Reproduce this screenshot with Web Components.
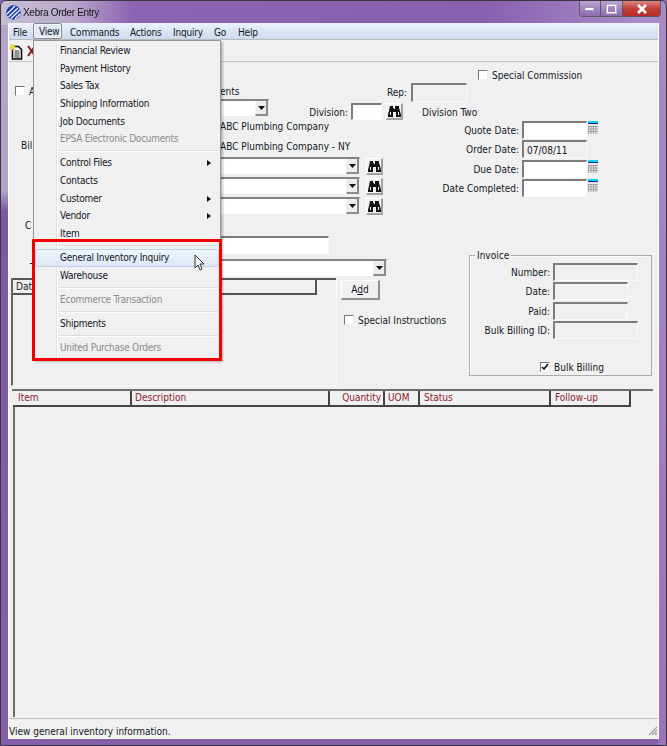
<!DOCTYPE html>
<html>
<head>
<meta charset="utf-8">
<title>Xebra Order Entry</title>
<style>
html, body { margin: 0; padding: 0; background: #8a62ad; }
body { font: 10px "DejaVu Sans Condensed", "DejaVu Sans", "Liberation Sans", sans-serif; font-stretch: condensed; color: #14181f; }
</style>
</head>
<body>

<app-window>
  <menu-bar slot="menubar"></menu-bar>
  <tool-bar slot="toolbar"></tool-bar>
  <order-form></order-form>
  <view-menu slot="overlay"></view-menu>
  <status-bar slot="status">View general inventory information.</status-bar>
</app-window>

<script>
const BINOCULARS = `<svg width="13" height="11" viewBox="0 0 13 11"><path fill="#111" d="M2 0h3v2h1v1h1V2h0V0h4v2l1 3 1 4v2H8V6H5v5H0V9l1-4z"/><path fill="#fff" d="M2 6h1v3H2zM10 6h1v3h-1z"/></svg>`;

const SUNKEN = `
  border-style: solid; border-width: 2px 1px 1px 2px;
  border-color: #7c7c7c #fbfbfb #fbfbfb #7c7c7c;
  box-sizing: border-box;`;

class AppWindow extends HTMLElement {
  constructor() {
    super();
    this.attachShadow({ mode: "open" }).innerHTML = `
      <style>
        :host { display: block; position: relative; width: 667px; height: 746px; overflow: hidden; filter: blur(.3px); }
        .frame {
          box-sizing: border-box; width: 667px; height: 746px; display: flex; flex-direction: column;
          border: 1px solid #3a3540; border-radius: 6px 6px 0 0;
          padding: 0 7px 6px 7px;
          background:
            linear-gradient(90deg, #c7bed2 0, #b9a9cc 70px, #8f63b3 130px, #8a5eae 480px, #a88bc6 640px) 0 0 / 100% 24px no-repeat,
            linear-gradient(180deg, #b7a6c9 0, #b3a1c7 190px, #7c58a6 210px, #8560aa 100%) 0 0 / 8px 100% no-repeat,
            linear-gradient(180deg, #a88bc6 0, #9a72bb 100%) 100% 0 / 8px 100% no-repeat,
            #8560aa;
        }
        .title { height: 22px; flex: none; display: flex; align-items: center; gap: 2px; margin-left: -2px; font: 10px "Liberation Sans", sans-serif; letter-spacing: -.3px; color: #15151c; }
        .title svg.logo { margin-top: 1px; }
        .caption { margin-left: auto; margin-right: -2px; align-self: flex-start; display: flex; height: 16px; border: 1px solid #5d5570; border-top: 0; border-radius: 0 0 4px 4px; box-sizing: border-box; }
        .caption div { display: flex; align-items: center; justify-content: center; box-sizing: border-box; background: linear-gradient(#b9a4d2, #a286c0 50%, #8c6bad); }
        .min { width: 21px; border-right: 1px solid #5d5570; }
        .max { width: 22px; border-right: 1px solid #5d5570; }
        .close { width: 37px; background: linear-gradient(#d98a82, #c4403a 50%, #b42a26) !important; border-radius: 0 0 3px 0; }
        .client { flex: 1; min-height: 0; display: flex; flex-direction: column; background: #f0f0f0; border: 1px solid #fff; border-top: 0; }
        .body { flex: 1; min-height: 0; display: flex; flex-direction: column; }
      </style>
      <div class="frame">
        <div class="title">
          <svg class="logo" width="15" height="15" viewBox="0 0 15 15"><circle cx="7.5" cy="7.5" r="7.2" fill="#1c3fb0"/><path d="M1 9 9 1M2.5 12 12 3M5 13.5 14 5M9 14l5-5" stroke="#fff" stroke-width="1.1" fill="none"/></svg>
          <span>Xebra Order Entry</span>
          <div class="caption">
            <div class="min"><svg width="10" height="4"><rect width="9" height="3" y=".5" fill="#fff" stroke="#555" stroke-width=".4"/></svg></div>
            <div class="max"><svg width="11" height="10"><rect x="1" y="1" width="9" height="8" fill="none" stroke="#fff" stroke-width="2"/><rect x=".4" y=".4" width="10.2" height="9.2" fill="none" stroke="#555" stroke-width=".4"/></svg></div>
            <div class="close"><svg width="12" height="10" viewBox="0 0 12 10"><path d="M2 1l8 8M10 1 2 9" stroke="#fff" stroke-width="2.6"/></svg></div>
          </div>
        </div>
        <div class="client">
          <slot name="menubar"></slot>
          <slot name="toolbar"></slot>
          <div class="body"><slot></slot></div>
          <slot name="status"></slot>
        </div>
      </div>
      <slot name="overlay"></slot>`;
  }
}

class MenuBar extends HTMLElement {
  constructor() {
    super();
    const items = [["File", 24, 4], ["View", 29, 5], ["Commands", 60, 8], ["Actions", 43, 8], ["Inquiry", 41, 8], ["Go", 24, 8], ["Help", 40, 8]];
    this.attachShadow({ mode: "open" }).innerHTML = `
      <style>
        :host { display: flex; height: 17px; box-sizing: border-box; align-items: stretch; background: linear-gradient(#eef2fa, #dbe4f3 50%, #cfdaed); border-bottom: 1px solid #b9b9b9; }
        div { display: flex; align-items: center; font-size: 10px; letter-spacing: -.2px; box-sizing: border-box; white-space: nowrap; padding-top: 2px; }
        .open { border: 1px solid #7f8790; border-radius: 2px; background: #e2e8f2; box-shadow: inset 0 0 0 1px #f6f8fc; padding-top: 1px; }
      </style>
      ${items.map(t => `<div class="${t[0] === "View" ? "open" : ""}" style="width:${t[1]}px;padding-left:${t[2]}px">${t[0]}</div>`).join("")}`;
  }
}

class ToolBar extends HTMLElement {
  constructor() {
    super();
    this.attachShadow({ mode: "open" }).innerHTML = `
      <style>
        :host { display: flex; height: 22px; box-sizing: border-box; padding: 3px 0 0 0; gap: 4px; background: #f0f0f0; border-bottom: 1px solid #c4c4c4; }
      </style>
      <svg width="14" height="17" viewBox="0 0 14 17">
        <path d="M3.5 3.5h6l3 3v9.5h-9z" fill="#fff" stroke="#000" stroke-width="1.5"/>
        <path d="M5.5 8h5M5.5 10h5M5.5 12h5M5.5 14h5" stroke="#222" stroke-width="1"/>
        <path d="M3 0l1 2 2-1-1 2 2 1-2 1 1 2-2-1-1 2-1-2-2 1 1-2-1-1 2-1-1-2 2 1z" fill="#e8d83a"/>
      </svg>
      <svg width="10" height="17" viewBox="0 0 10 17"><path d="M1 3l7 10M8 3 1 13" stroke="#8c1a1a" stroke-width="2" fill="none"/></svg>`;
  }
}

class StatusBar extends HTMLElement {
  constructor() {
    super();
    this.attachShadow({ mode: "open" }).innerHTML = `
      <style>
        :host { display: flex; align-items: center; height: 20px; flex: none; border-top: 1px solid #c0c0c0; padding: 6px 0 0 0; box-sizing: border-box; }
        svg { margin-left: auto; margin-top: -2px; }
      </style>
      <slot></slot>
      <svg width="11" height="11" viewBox="0 0 11 11"><path d="M2 10 10 2M5 10l5-5M8 10l2-2" stroke="#a0a0a0" stroke-width="1.2"/></svg>`;
  }
}

class TextBox extends HTMLElement {
  constructor() {
    super();
    this.attachShadow({ mode: "open" }).innerHTML = `
      <style>
        :host { display: flex; align-items: center; flex: none; ${SUNKEN} background: #fff; padding-left: 2px; }
        :host([disabled]) { background: #f0f0f0; }
      </style>
      <slot></slot>`;
  }
  connectedCallback() {
    this.style.width = this.getAttribute("w") + "px";
    this.style.height = this.getAttribute("h") + "px";
  }
}

class ComboBox extends HTMLElement {
  constructor() {
    super();
    this.attachShadow({ mode: "open" }).innerHTML = `
      <style>
        :host { display: flex; flex: none; justify-content: flex-end; box-sizing: border-box; background: #fff; border-style: solid; border-width: 2px 1px 1px 2px; border-color: #858585 #eee #eee #858585; }
        .arrow { width: 13px; display: flex; align-items: center; justify-content: center; background: #ececec; border-style: solid; border-width: 0 2px 2px 1px; border-color: #8a8a8a; border-left-color: #f4f4f4; box-sizing: border-box; }
      </style>
      <div class="arrow"><svg width="7" height="4"><path d="M0 0h7L3.5 4z" fill="#111"/></svg></div>`;
  }
  connectedCallback() {
    this.style.width = this.getAttribute("w") + "px";
    this.style.height = this.getAttribute("h") + "px";
  }
}

class FindButton extends HTMLElement {
  constructor() {
    super();
    this.attachShadow({ mode: "open" }).innerHTML = `
      <style>
        :host { display: flex; align-items: center; justify-content: center; flex: none; width: 17px; height: 17px; box-sizing: border-box; background: #f0f0f0; border-style: solid; border-width: 1px 2px 2px 1px; border-color: #fff #a0a0a0 #a0a0a0 #fff; }
      </style>
      ${BINOCULARS}`;
  }
}

class CheckBox extends HTMLElement {
  constructor() {
    super();
    const checked = this.hasAttribute("checked");
    this.attachShadow({ mode: "open" }).innerHTML = `
      <style>
        :host { display: inline-flex; align-items: center; gap: 4px; height: 14px; }
        .box { width: 10px; height: 10px; box-sizing: border-box; background: #fff; border-style: solid; border-width: 1px; border-color: #777 #eee #eee #777; display: flex; align-items: center; justify-content: center; }
      </style>
      <div class="box">${checked ? `<svg width="8" height="8" viewBox="0 0 8 8"><path d="M1 4l2 2 4-5" stroke="#111" stroke-width="1.6" fill="none"/></svg>` : ""}</div>
      <span><slot></slot></span>`;
  }
}

class CalButton extends HTMLElement {
  constructor() {
    super();
    this.attachShadow({ mode: "open" }).innerHTML = `
      <style>:host { display: block; flex: none; width: 10px; height: 13px; }</style>
      <svg width="10" height="13" viewBox="0 0 10 13">
        <rect width="10" height="3" fill="#10d0f0"/><rect y="2" width="10" height="1" fill="#1020a0"/>
        <rect y="3" width="10" height="10" fill="#e6e6e6"/>
        <path d="M.5 5v8M3 5v8M5.5 5v8M8 5v8M0 5.5h10M0 8h10M0 10.5h10" stroke="#8d8d8d" stroke-width=".7"/>
      </svg>`;
  }
}

class DateField extends HTMLElement {
  constructor() {
    super();
    const label = this.getAttribute("label");
    const value = this.getAttribute("value") || "";
    const cal = !this.hasAttribute("nocal");
    this.attachShadow({ mode: "open" }).innerHTML = `
      <style>
        :host { display: flex; align-items: flex-start; }
        .lbl { width: 134px; line-height: 20px; height: 18px; text-align: right; margin-right: 3px; flex: none; }
        text-box { padding-left: 3px; padding-top: 2px; }
        cal-button { margin-left: 1px; }
      </style>
      <div class="lbl">${label}</div>
      <text-box w="65" h="18" ${cal ? "" : "disabled"}>${value}</text-box>
      ${cal ? "<cal-button></cal-button>" : ""}`;
  }
}

class InvoiceField extends HTMLElement {
  constructor() {
    super();
    this.attachShadow({ mode: "open" }).innerHTML = `
      <style>
        :host { display: flex; align-items: center; }
        .lbl { width: 80px; text-align: right; margin-right: 3px; flex: none; }
      </style>
      <div class="lbl">${this.getAttribute("label")}</div>
      <text-box disabled w="${this.getAttribute("w")}" h="${this.getAttribute("h")}"></text-box>`;
  }
}

class InvoiceGroup extends HTMLElement {
  constructor() {
    super();
    this.attachShadow({ mode: "open" }).innerHTML = `
      <style>
        :host { display: flex; flex-direction: column; position: relative; flex: none; box-sizing: border-box; width: 183px; height: 121px; border: 1px solid #acacac; box-shadow: inset 1px 1px 0 #fbfbfb; padding-top: 7px; }
        .legend { position: absolute; left: 5px; top: -7px; padding: 0 2px; background: #f0f0f0; line-height: 13px; }
      </style>
      <div class="legend">Invoice</div>
      <slot></slot>`;
  }
}

class OrderGrid extends HTMLElement {
  constructor() {
    super();
    const cols = [["Item", 119, 5], ["Description", 198, 3], ["Quantity", 55, 0], ["UOM", 35, 3], ["Status", 131, 4], ["Follow-up", 80, 4]];
    this.attachShadow({ mode: "open" }).innerHTML = `
      <style>
        :host { display: flex; flex-direction: column; flex: 1; min-height: 0; box-sizing: border-box; margin: 3px 0 0 4px; width: 640px; }
        .top { border-top: 2px solid #6e6e6e; margin-left: -1px; }
        .head { display: flex; height: 14px; border-bottom: 2px solid #444; margin-left: 1px; width: max-content; }
        .head div { box-sizing: border-box; height: 14px; color: #8d1a2c; border-right: 2px solid #444; line-height: 13px; }
        .num { text-align: right; padding-right: 2px; }
        .rest { flex: 1; border-left: 2px solid #6e6e6e; }
        .wrap { display: flex; flex-direction: column; flex: 1; }
      </style>
      <div class="wrap">
        <div class="top"><div class="head">${cols.map(c => `<div class="${c[2] ? "" : "num"}" style="width:${c[1]}px;padding-left:${c[2]}px">${c[0]}</div>`).join("")}</div></div>
        <div class="rest"></div>
      </div>`;
  }
}

class OrderForm extends HTMLElement {
  constructor() {
    super();
    this.attachShadow({ mode: "open" }).innerHTML = `
      <style>
        :host { display: flex; flex-direction: column; flex: 1; min-height: 0; padding-bottom: 1px; box-sizing: border-box; }
        .upper { display: flex; height: 193px; flex: none; }
        .left { width: 191px; flex: none; display: flex; flex-direction: column; padding-left: 6px; box-sizing: border-box; }
        .mid { width: 194px; flex: none; display: flex; flex-direction: column; }
        .right { flex: 1; display: flex; flex-direction: column; margin-left: -9px; }
        .row { display: flex; align-items: flex-start; }
        .txt { line-height: 14px; padding-left: 20px; }
        .gap2 { margin-top: 2px; }
        .rep { display: flex; align-items: center; margin-top: 1px; padding-left: 2px; height: 19px; }
        .rep span { width: 24px; flex: none; }
        .lower { display: flex; flex: none; height: 131px; }
        .lowerleft { width: 460px; flex: none; display: flex; flex-direction: column; }
        .panel { display: flex; flex: 1; }
        .dates { display: flex; flex-direction: column; }
        .hdr { box-sizing: border-box; width: 304px; height: 15px; border-width: 0 2px 2px 0; border-style: solid; border-color: #555; line-height: 13px; padding-left: 3px; }
        .box { box-sizing: border-box; width: 326px; margin-left: 2px; border-left: 2px solid #666; border-right: 1px solid #fbfbfb; border-bottom: 1px solid #fbfbfb; height: 108px; }
        .topline { border-top: 2px solid #555; width: 323px; }
        .side { display: flex; flex-direction: column; padding-left: 4px; }
        .add { box-sizing: border-box; width: 39px; height: 20px; margin-top: 2px; background: #f0f0f0; border-style: solid; border-width: 1px 2px 2px 1px; border-color: #fff #8f8f8f #8f8f8f #fff; display: flex; align-items: center; justify-content: center; }
        u { text-underline-offset: 1px; }
        find-button.near { margin: 1px 0 0 6px; }
      </style>
      <div class="upper">
        <div class="left">
          <check-box style="margin-top:22px">A</check-box>
          <div style="margin:41px 0 0 6px; line-height:14px">Bil</div>
          <div style="margin:66px 0 0 10px; line-height:14px">C</div>
        </div>
        <div class="mid">
          <div class="txt" style="margin-top:23px;height:14px">ents</div>
          <div class="row" style="width:185px">
            <combo-box w="69" h="18"></combo-box>
            <div class="row" style="margin:4px 0 0 auto;padding-right:3px;align-items:center;gap:3px"><span style="padding-top:2px">Division:</span><text-box w="31" h="17"></text-box></div>
          </div>
          <div class="txt">ABC Plumbing Company</div>
          <div class="txt" style="margin-top:6px">ABC Plumbing Company - NY</div>
          <div class="row" style="margin-top:3px"><combo-box w="160" h="18"></combo-box><find-button class="near"></find-button></div>
          <div class="row gap2"><combo-box w="160" h="18"></combo-box><find-button class="near"></find-button></div>
          <div class="row gap2"><combo-box w="160" h="18"></combo-box><find-button class="near"></find-button></div>
          <text-box w="129" h="18" style="margin-top:21px"></text-box>
        </div>
        <div class="right">
          <check-box style="margin:6px 0 0 93px">Special Commission</check-box>
          <div class="rep"><span>Rep:</span><text-box disabled w="56" h="19"></text-box></div>
          <div class="row" style="margin-top:1px;align-items:center"><find-button style="margin-left:1px"></find-button><span style="margin-left:19px;padding-top:2px">Division Two</span></div>
          <div class="dates" style="margin-top:1px">
            <date-field label="Quote Date:"></date-field>
            <date-field label="Order Date:" value="07/08/11" nocal style="margin-top:1px"></date-field>
            <date-field label="Due Date:" style="margin-top:2px"></date-field>
            <date-field label="Date Completed:" style="margin-top:1px"></date-field>
          </div>
        </div>
      </div>
      <div class="lower">
        <div class="lowerleft">
          <div class="row" style="margin-top:4px;height:19px">
            <span style="width:191px;padding-left:21px;box-sizing:border-box;line-height:18px">T</span>
            <combo-box w="187" h="18"></combo-box>
          </div>
          <div class="panel">
            <div class="box"><div class="topline"><div class="hdr">Dat</div></div></div>
            <div class="side">
              <div class="add"><span>A<u>d</u>d</span></div>
              <check-box style="margin:13px 0 0 3px">Special Instructions</check-box>
            </div>
          </div>
        </div>
        <invoice-group>
          <invoice-field label="Number:" w="85" h="18"></invoice-field>
          <invoice-field label="Date:" w="75" h="18" style="margin-top:1px"></invoice-field>
          <invoice-field label="Paid:" w="75" h="18" style="margin-top:2px"></invoice-field>
          <invoice-field label="Bulk Billing ID:" w="85" h="18" style="margin-top:1px"></invoice-field>
          <check-box checked style="margin:21px 0 0 70px">Bulk Billing</check-box>
        </invoice-group>
      </div>
      <order-grid></order-grid>`;
  }
}

class ViewMenu extends HTMLElement {
  constructor() {
    super();
    const rows = [
      ["Financial Review"], ["Payment History"], ["Sales Tax"], ["Shipping Information"], ["Job Documents"],
      ["EPSA Electronic Documents", "off"], "-",
      ["Control Files", "sub"], ["Contacts"], ["Customer", "sub"], ["Vendor", "sub"], ["Item"], "-",
      ["General Inventory Inquiry", "hot"], ["Warehouse"], "-",
      ["Ecommerce Transaction", "off"], "-",
      ["Shipments"], "-",
      ["United Purchase Orders", "off"]
    ];
    const html = rows.map(r => r === "-"
      ? `<div class="sep"></div>`
      : `<div class="item ${r[1] || ""}">${r[0]}</div>`).join("");
    this.attachShadow({ mode: "open" }).innerHTML = `
      <style>
        :host { display: block; position: absolute; left: 33px; top: 40px; width: 188px; height: 320px; box-sizing: border-box; background: #f0f0f0; border: 1px solid #979797; box-shadow: 2px 2px 2px rgba(0,0,0,.25); z-index: 5; padding: 1px 2px; letter-spacing: -.25px; }
        .gutter { position: absolute; left: 22px; top: 1px; bottom: 1px; border-left: 1px solid #e2e2e2; border-right: 1px solid #fff; }
        .item { position: relative; height: 17.7px; line-height: 17.7px; padding-left: 24px; }
        .off { color: #8b8b8b; }
        .sub::after { content: ""; position: absolute; right: 7px; top: 6px; border-left: 4px solid #111; border-top: 3.5px solid transparent; border-bottom: 3.5px solid transparent; }
        .hot { margin: 0 -1px; box-sizing: border-box; height: 18.2px; background: linear-gradient(#f0f4fb, #dde7f5); border: 1px solid #bcd2ea; border-radius: 2px; line-height: 15.7px; }
        .sep { height: 6.3px; box-sizing: border-box; margin-left: 22px; padding-top: 2px; }
        .sep::after { content: ""; display: block; border-top: 1px solid #dcdcdc; border-bottom: 1px solid #fff; }
        .mark { position: absolute; left: -2px; top: 198px; width: 190px; height: 122px; box-sizing: border-box; border: 3px solid #f40000; }
        .cursor { position: absolute; left: 160px; top: 213px; }
      </style>
      <div class="gutter"></div>
      ${html}
      <div class="mark"></div>
      <svg class="cursor" width="12" height="18" viewBox="0 0 12 18"><path d="M1 1v13l3-3 2 5 2-1-2-5h4z" fill="#f4f4f4" stroke="#333" stroke-width="1"/></svg>`;
  }
}

customElements.define("text-box", TextBox);
customElements.define("combo-box", ComboBox);
customElements.define("find-button", FindButton);
customElements.define("check-box", CheckBox);
customElements.define("cal-button", CalButton);
customElements.define("date-field", DateField);
customElements.define("invoice-field", InvoiceField);
customElements.define("invoice-group", InvoiceGroup);
customElements.define("order-grid", OrderGrid);
customElements.define("order-form", OrderForm);
customElements.define("view-menu", ViewMenu);
customElements.define("status-bar", StatusBar);
customElements.define("tool-bar", ToolBar);
customElements.define("menu-bar", MenuBar);
customElements.define("app-window", AppWindow);
</script>
</body>
</html>
